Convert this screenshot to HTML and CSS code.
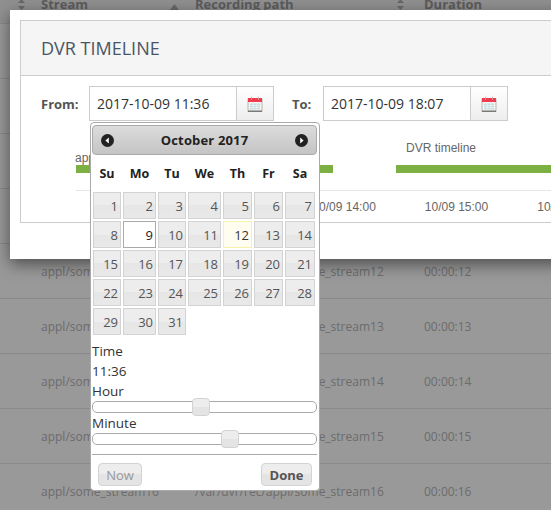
FILE: index.html
```html
<!DOCTYPE html>
<html lang="en">
<head>
<meta charset="utf-8">
<title>DVR timeline</title>
<link rel="stylesheet" href="styles.css">
</head>
<body>
<svg class="sprites" width="0" height="0" aria-hidden="true">
  <symbol id="cal" viewBox="0 0 16 16">
    <rect x="1" y="3" width="14" height="12.5" fill="#f4f4f0" stroke="#8a8a80" stroke-width=".6"/>
    <rect x="1" y="2" width="14" height="4" fill="#ee3b4e"/>
    <rect x="3" y="7.5" width="10" height="6" fill="#c6dce4"/>
    <path d="M3 9.5h10M3 11.5h10M6.3 7.5v6M9.7 7.5v6" stroke="#f4f4f0" stroke-width=".7"/>
    <path d="M4.5 .8v3M11.5 .8v3" stroke="#caa" stroke-width="1"/>
    <rect x="1" y="14.6" width="14" height="1" fill="#555"/>
  </symbol>
  <symbol id="sort-both" viewBox="0 0 7 11">
    <path d="M3.5 0L7 4H0zM3.5 11L0 7h7z" fill="#b0b0b0"/>
  </symbol>
  <symbol id="sort-up" viewBox="0 0 9 6">
    <path d="M4.5 0L9 6H0z" fill="#b0b0b0"/>
  </symbol>
</svg>
<div class="table">
  <div class="row head"><span class="sort s1"><svg width="7" height="11"><use href="#sort-both"/></svg></span><span class="c1">Stream</span><span class="sort s2"><svg width="9" height="6"><use href="#sort-up"/></svg></span><span class="c2">Recording path</span><span class="sort s3"><svg width="7" height="11"><use href="#sort-both"/></svg></span><span class="c3">Duration</span></div>
  <div class="row"><span class="c1">appl/some_stream7</span><span class="c2">/var/dvr/rec/appl/some_stream7</span><span class="c3">00:00:07</span></div>
  <div class="row"><span class="c1">appl/some_stream8</span><span class="c2">/var/dvr/rec/appl/some_stream8</span><span class="c3">00:00:08</span></div>
  <div class="row"><span class="c1">appl/some_stream9</span><span class="c2">/var/dvr/rec/appl/some_stream9</span><span class="c3">00:00:09</span></div>
  <div class="row"><span class="c1">appl/some_stream11</span><span class="c2">/var/dvr/rec/appl/some_stream11</span><span class="c3">00:00:11</span></div>
  <div class="row"><span class="c1">appl/some_stream12</span><span class="c2">/var/dvr/rec/appl/some_stream12</span><span class="c3">00:00:12</span></div>
  <div class="row"><span class="c1">appl/some_stream13</span><span class="c2">/var/dvr/rec/appl/some_stream13</span><span class="c3">00:00:13</span></div>
  <div class="row"><span class="c1">appl/some_stream14</span><span class="c2">/var/dvr/rec/appl/some_stream14</span><span class="c3">00:00:14</span></div>
  <div class="row"><span class="c1">appl/some_stream15</span><span class="c2">/var/dvr/rec/appl/some_stream15</span><span class="c3">00:00:15</span></div>
  <div class="row"><span class="c1">appl/some_stream16</span><span class="c2">/var/dvr/rec/appl/some_stream16</span><span class="c3">00:00:16</span></div>
</div>
<div class="overlay"></div>
<div class="modal">
  <div class="panel">
    <div class="panel-head"><h1>DVR TIMELINE</h1></div>
    <div class="form">
      <label class="lbl-from">From:</label>
      <div class="field"><span class="value">2017-10-09 11:36</span><span class="addon"><svg width="16" height="16"><use href="#cal"/></svg></span></div>
      <label class="lbl-to">To:</label>
      <div class="field"><span class="value">2017-10-09 18:07</span><span class="addon"><svg width="16" height="16"><use href="#cal"/></svg></span></div>
    </div>
    <div class="timeline">
      <div class="tracks">
        <div class="track t1"><span class="tlabel">appl/some_stream</span><div class="bar"></div></div>
        <div class="track t2"><span class="tlabel">DVR timeline</span><div class="bar"></div></div>
      </div>
      <div class="axis">
        <span>10/09 13:00</span><span>10/09 14:00</span><span>10/09 15:00</span><span>10/09 16:00</span>
      </div>
    </div>
  </div>
</div>
<div class="picker">
  <div class="pk-head">
    <span class="nav"><svg width="13" height="13" viewBox="0 0 13 13"><circle cx="6.5" cy="6.5" r="6.5" fill="#222"/><path d="M7.8 3.6v5.8L4.4 6.5z" fill="#fff"/></svg></span>
    <span class="pk-title">October 2017</span>
    <span class="nav"><svg width="13" height="13" viewBox="0 0 13 13"><circle cx="6.5" cy="6.5" r="6.5" fill="#222"/><path d="M5.2 3.6v5.8l3.4-2.9z" fill="#fff"/></svg></span>
  </div>
  <div class="cal">
    <b>Su</b><b>Mo</b><b>Tu</b><b>We</b><b>Th</b><b>Fr</b><b>Sa</b>
    <a>1</a><a>2</a><a>3</a><a>4</a><a>5</a><a>6</a><a>7</a>
    <a>8</a><a class="active">9</a><a>10</a><a>11</a><a class="today">12</a><a>13</a><a>14</a>
    <a>15</a><a>16</a><a>17</a><a>18</a><a>19</a><a>20</a><a>21</a>
    <a>22</a><a>23</a><a>24</a><a>25</a><a>26</a><a>27</a><a>28</a>
    <a>29</a><a>30</a><a>31</a>
  </div>
  <div class="time">
    <div class="tline">Time</div>
    <div class="tline">11:36</div>
    <div class="tline">Hour</div>
    <div class="slider"><span class="handle h-hour"></span></div>
    <div class="tline min">Minute</div>
    <div class="slider"><span class="handle h-min"></span></div>
  </div>
  <div class="pk-foot">
    <button class="btn now">Now</button>
    <button class="btn done">Done</button>
  </div>
</div>
</body>
</html>
```
FILE: styles.css
```css
html, body {
  margin: 0;
  height: 100%;
  overflow: hidden;
  background: #fff;
  font-family: "Open Sans", sans-serif;
  color: #333;
}
.sprites { position: absolute; }

/* page behind the dialog */
.table {
  margin-top: -31px;
  font-size: 12px;
  color: #b5b5b5;
}
.row {
  display: flex;
  align-items: center;
  height: 54px;
  border-bottom: 1px solid #e4e4e4;
}
.row.head {
  font-weight: 700;
  font-size: 13px;
  align-items: flex-end;
  padding-bottom: 10px;
  height: 44px;
  color: #999;
  background: #f0f0f0;
}
.c1, .c2, .c3 { white-space: nowrap; }
.c1 { margin-left: 41px; width: 154px; flex: none; }
.c2 { width: 229px; flex: none; }
.sort { display: flex; flex: none; padding-bottom: 3px; }
.head .c1 { margin-left: 0; width: 127px; }
.head .c2 { width: 199px; }
.s1 { margin-left: 18px; width: 23px; }
.s2 { width: 27px; margin-left: 2px; margin-right: -2px; }
.s3 { width: 30px; margin-left: 3px; margin-right: -3px; }

.overlay {
  position: absolute;
  inset: 0;
  background: rgba(0, 0, 0, .4);
}

/* dialog */
.modal {
  position: absolute;
  left: 10px;
  top: 10px;
  width: 800px;
  height: 249px;
  padding: 10px;
  box-sizing: border-box;
  background: #fff;
  box-shadow: 0 5px 15px rgba(0, 0, 0, .5);
}
.panel {
  height: 203px;
  box-sizing: border-box;
  border: 1px solid #ccc;
}
.panel-head {
  height: 54px;
  display: flex;
  align-items: center;
  padding-left: 20px;
  background: #f5f5f5;
  border-bottom: 1px solid #ccc;
}
h1 {
  margin: 0;
  font-size: 18px;
  font-weight: 400;
  color: #4a5562;
}
.form {
  display: flex;
  align-items: center;
  margin-top: 10px;
  font-size: 13px;
}
.lbl-from { font-weight: 700; color: #555; margin-left: 20px; width: 48px; }
.lbl-to { font-weight: 700; color: #555; margin-left: 18px; width: 31px; }
.field {
  display: flex;
  width: 185px;
  height: 35px;
  box-sizing: border-box;
  border: 1px solid #ccc;
  background: #fff;
}
.value {
  flex: 1;
  display: flex;
  align-items: center;
  padding-left: 7px;
  font-size: 14px;
  color: #333;
}
.addon {
  width: 36px;
  display: flex;
  align-items: center;
  justify-content: center;
  border-left: 1px solid #ccc;
  background: linear-gradient(#fff, #ededed);
}

/* timeline */
.timeline {
  font-family: "Liberation Sans", Arial, sans-serif;
  font-size: 12px;
  color: #666;
  margin-left: 55px;
}
.tracks { display: flex; align-items: flex-end; margin-top: 20px; }
.track { display: flex; flex-direction: column; flex: none; }
.t1 { width: 257px; }
.t2 { width: 400px; margin-left: 63px; }
.tlabel { height: 14px; line-height: 14px; white-space: nowrap; margin-left: 10px; }
.t1 .tlabel { margin-left: -1px; }
.t2 .tlabel { margin-bottom: 10px; }
.bar { height: 8px; background: #7cb043; }
.axis {
  display: flex;
  gap: 49px;
  margin-top: 17px;
  padding: 9px 0 0 124px;
  border-top: 1px solid #e6e6e6;
  line-height: 14px;
  white-space: nowrap;
}

/* datepicker */
.picker {
  position: absolute;
  left: 90px;
  top: 122px;
  width: 230px;
  height: 369px;
  box-sizing: border-box;
  padding: 2px 2px 2px 1px;
  background: #fff;
  border: 1px solid #aaa;
  border-radius: 4px;
  display: flex;
  flex-direction: column;
}
.pk-head {
  height: 30px;
  flex: none;
  box-sizing: border-box;
  display: flex;
  align-items: center;
  justify-content: space-between;
  padding: 0 8px;
  border: 1px solid #aaa;
  border-radius: 4px;
  background: linear-gradient(#dcdcdc, #c4c4c4);
}
.nav { display: flex; }
.pk-title {
  font-size: 13px;
  font-weight: 700;
  color: #222;
  letter-spacing: .15px;
}
.cal {
  display: grid;
  grid-template-columns: 28px 33px 28px 33px 29px 29px 30px;
  grid-auto-rows: 27px;
  gap: 2px;
  margin-top: 8px;
  margin-left: 1px;
  font-size: 13px;
}
.cal b {
  display: flex;
  align-items: center;
  justify-content: center;
  color: #222;
  font-size: 12.5px;
  box-sizing: border-box;
  height: 27px;
  padding-bottom: 6px;
}
.cal a {
  display: block;
  box-sizing: border-box;
  border: 1px solid #d3d3d3;
  padding: 3px 2px 0 0;
  line-height: 20px;
  text-align: right;
  color: #555;
  background: linear-gradient(#ededed 50%, #e6e6e6 50%, #e9e9e9);
}
.cal a.active { background: #fff; border-color: #aaa; color: #212121; }
.cal a.today { background: #fffdf0; border-color: #f6f3a8; color: #363636; }
.time {
  margin-top: 6px;
  font-size: 13.5px;
  color: #333;
}
.tline { line-height: 20px; }
.slider {
  position: relative;
  height: 12px;
  box-sizing: border-box;
  border: 1px solid #aaa;
  border-radius: 5px;
  background: #fff;
}
.handle {
  position: absolute;
  top: -4px;
  width: 18px;
  height: 18px;
  box-sizing: border-box;
  border: 1px solid #d3d3d3;
  border-radius: 4px;
  background: linear-gradient(#ededed 50%, #e4e4e4 50%);
}
.h-hour { left: 99px; }
.h-min { left: 128px; }
.pk-foot {
  display: flex;
  justify-content: space-between;
  margin-top: 9px;
  padding: 8px 5px 0 6px;
  border-top: 1px solid #aaa;
}
.btn {
  height: 23px;
  padding: 0;
  font: 700 13px "Open Sans", sans-serif;
  color: #555;
  border: 1px solid #d3d3d3;
  border-radius: 4px;
  background: linear-gradient(#ededed 50%, #e4e4e4 50%);
}
.now { width: 44px; font-weight: 400; color: #999; }
.done { width: 51px; }
```
